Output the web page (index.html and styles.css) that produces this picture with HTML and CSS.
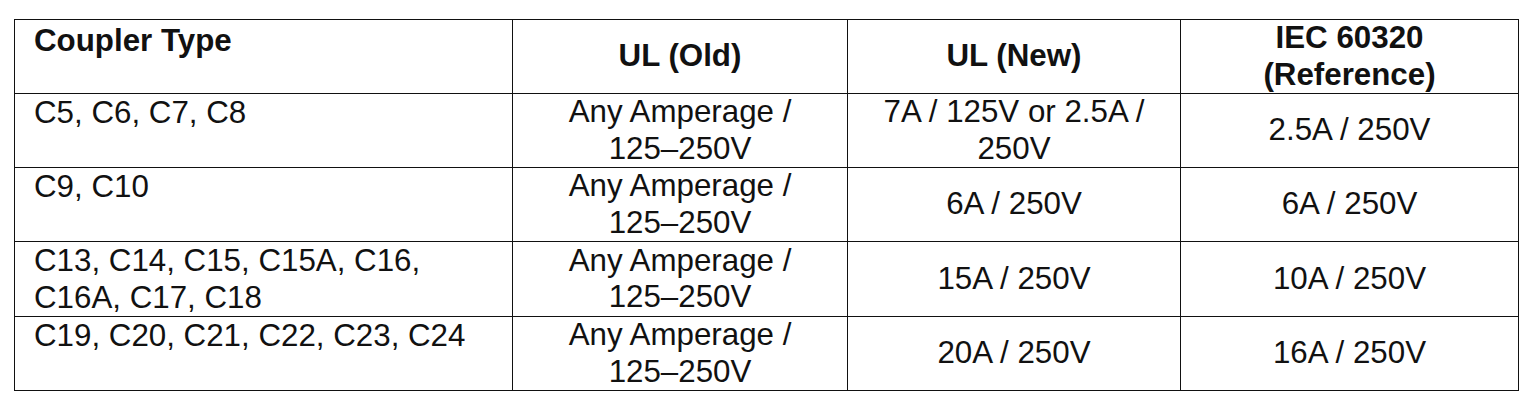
FILE: index.html
```html
<!DOCTYPE html>
<html lang="en">
<head>
<meta charset="utf-8">
<title>Coupler ratings</title>
<link rel="stylesheet" href="styles.css">
</head>
<body>
<table class="ratings">
  <colgroup>
    <col class="c-type">
    <col class="c-old">
    <col class="c-new">
    <col class="c-iec">
  </colgroup>
  <thead>
    <tr>
      <th class="type">Coupler Type</th>
      <th>UL (Old)</th>
      <th>UL (New)</th>
      <th>IEC 60320<br>(Reference)</th>
    </tr>
  </thead>
  <tbody>
    <tr>
      <td class="type">C5, C6, C7, C8</td>
      <td>Any Amperage / <span class="nw">125–250V</span></td>
      <td>7A / 125V or 2.5A / 250V</td>
      <td>2.5A / 250V</td>
    </tr>
    <tr>
      <td class="type">C9, C10</td>
      <td>Any Amperage / <span class="nw">125–250V</span></td>
      <td>6A / 250V</td>
      <td>6A / 250V</td>
    </tr>
    <tr>
      <td class="type">C13, C14, C15, C15A, C16, C16A, C17, C18</td>
      <td>Any Amperage / <span class="nw">125–250V</span></td>
      <td>15A / 250V</td>
      <td>10A / 250V</td>
    </tr>
    <tr class="last">
      <td class="type">C19, C20, C21, C22, C23, C24</td>
      <td>Any Amperage / <span class="nw">125–250V</span></td>
      <td>20A / 250V</td>
      <td>16A / 250V</td>
    </tr>
  </tbody>
</table>
</body>
</html>
```

FILE: styles.css
```css
html, body {
  margin: 0;
  padding: 0;
  background: #ffffff;
}

body {
  font-family: "Liberation Sans", Arial, Helvetica, sans-serif;
  color: #111111;
}

.ratings {
  margin: 19px 0 0 14px;
  border-collapse: collapse;
  table-layout: fixed;
  width: 1504px;
  font-size: 31.3px;
  line-height: 36.5px;
}

.c-type { width: 498px; }
.c-old { width: 335px; }
.c-new { width: 333px; }
.c-iec { width: 338px; }

.ratings th,
.ratings td {
  border: 1.3px solid #111111;
  padding: 0 12px;
  text-align: center;
  vertical-align: middle;
}

.nw {
  white-space: nowrap;
}

.ratings th {
  font-weight: bold;
  height: 73px;
  box-sizing: border-box;
}

.ratings td {
  font-weight: normal;
  height: 73px;
  box-sizing: border-box;
}

.ratings .type {
  text-align: left;
  vertical-align: top;
  padding-left: 19px;
  padding-right: 30px;
  padding-top: 1px;
}

.ratings th.type {
  padding-top: 3px;
}
```
